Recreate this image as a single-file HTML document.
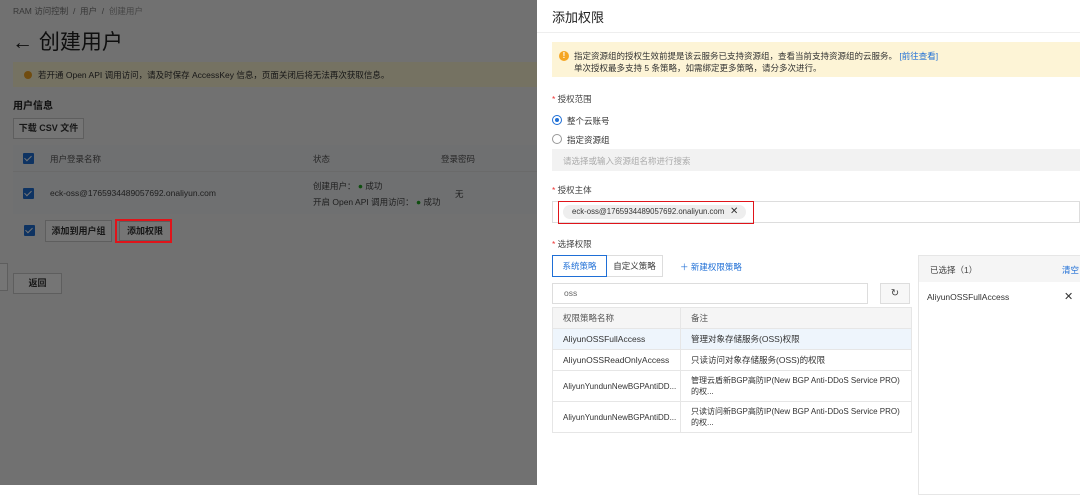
<!DOCTYPE html>
<html><head><meta charset="utf-8"><style>
*{margin:0;padding:0;box-sizing:border-box}
body{width:1080px;height:485px;overflow:hidden;position:relative;background:#fff;font-family:"Liberation Sans","Noto Sans CJK SC",sans-serif;font-size:9px;color:#333}
.a{position:absolute;white-space:nowrap}
.cb{position:absolute;width:11px;height:11px;background:#1f6fd6;border-radius:1px}
.cb:after{content:"";position:absolute;left:3px;top:1px;width:3px;height:6px;border:solid #fff;border-width:0 1.5px 1.5px 0;transform:rotate(45deg)}
.btn{position:absolute;border:1px solid #ccc;background:#fff;text-align:center;font-size:9px;color:#333;white-space:nowrap}
.ov{position:absolute;left:0;top:0;width:537px;height:485px;background:rgba(0,0,0,0.54)}
table{table-layout:fixed}
td{border:1px solid #e6e6e6;padding:0 10px;font-size:8.5px;color:#333;white-space:nowrap;overflow:hidden}
</style></head><body>
<div class="a" style="left:0;top:0;width:537px;height:485px;background:#f7f7f7"></div>
<div class="a" style="left:13px;top:5px;color:#777;font-size:8.5px">RAM 访问控制 &nbsp;/&nbsp; 用户 &nbsp;/&nbsp; <span style="color:#999">创建用户</span></div>
<div class="a" style="left:12px;top:26px;font-size:21px;color:#222">←&nbsp;创建用户</div>
<div class="a" style="left:13px;top:62px;width:524px;height:25px;background:#fff8d6"></div>
<div class="a" style="left:24px;top:71px;width:8px;height:8px;border-radius:50%;background:#f5a623"></div>
<div class="a" style="left:38px;top:69px;font-size:8.5px;color:#333">若开通 Open API 调用访问，请及时保存 AccessKey 信息，页面关闭后将无法再次获取信息。</div>
<div class="a" style="left:13px;top:97px;font-size:10px;font-weight:bold;color:#222">用户信息</div>
<div class="btn" style="left:13px;top:118px;width:71px;height:21px;line-height:19px;font-weight:bold">下载 CSV 文件</div>
<div class="a" style="left:13px;top:145px;width:524px;height:27px;background:#f2f4f7;border-bottom:1px solid #e6e6e6"></div>
<div class="a" style="left:13px;top:172px;width:524px;height:42px;background:#f2f4f7"></div>
<div class="cb" style="left:23px;top:153px"></div>
<div class="cb" style="left:23px;top:188px"></div>
<div class="cb" style="left:24px;top:225px"></div>
<div class="a" style="left:50px;top:153px;color:#555;font-size:8.5px">用户登录名称</div>
<div class="a" style="left:313px;top:153px;color:#555;font-size:8.5px">状态</div>
<div class="a" style="left:441px;top:153px;color:#555;font-size:8.5px">登录密码</div>
<div class="a" style="left:50px;top:188px;color:#444;font-size:8.5px">eck-oss@1765934489057692.onaliyun.com</div>
<div class="a" style="left:313px;top:180px;color:#444;font-size:8.5px">创建用户： <span style="color:#2a2">●</span> 成功</div>
<div class="a" style="left:313px;top:196px;color:#444;font-size:8.5px">开启 Open API 调用访问： <span style="color:#2a2">●</span> 成功</div>
<div class="a" style="left:455px;top:188px;color:#444;font-size:8.5px">无</div>
<div class="btn" style="left:45px;top:220px;width:67px;height:22px;line-height:20px;font-weight:bold">添加到用户组</div>
<div class="btn" style="left:119px;top:221px;width:52px;height:20px;line-height:18px;font-weight:bold">添加权限</div>
<div class="a" style="left:0;top:263px;width:8px;height:28px;border:1px solid #ccc;background:#fff;border-left:none"></div>
<div class="btn" style="left:13px;top:273px;width:49px;height:21px;line-height:19px;font-weight:bold">返回</div>
<div class="ov"></div>
<div class="a" style="left:115px;top:219px;width:57px;height:24px;border:2px solid #e0141a"></div>
<div class="a" style="left:552px;top:7px;font-size:13px;color:#222">添加权限</div>
<div class="a" style="left:537px;top:32px;width:543px;height:1px;background:#eee"></div>
<div class="a" style="left:552px;top:42px;width:528px;height:35px;background:#fdf4d6"></div>
<div class="a" style="left:559px;top:51px;width:10px;height:10px;border-radius:50%;background:#f5a623;color:#fff;font-size:8px;line-height:10px;text-align:center;font-weight:bold">!</div>
<div class="a" style="left:574px;top:50px;font-size:8.5px;line-height:12px;color:#333">指定资源组的授权生效前提是该云服务已支持资源组，查看当前支持资源组的云服务。 <span style="color:#1f6fd6">[前往查看]</span><br>单次授权最多支持 5 条策略，如需绑定更多策略，请分多次进行。</div>
<div class="a" style="left:552px;top:93px;font-size:8.5px;color:#444"><span style="color:#e33">*</span> 授权范围</div>
<div class="a" style="left:552px;top:115px;width:10px;height:10px;border-radius:50%;border:1px solid #1f6fd6"><div class="a" style="left:2px;top:2px;width:4px;height:4px;border-radius:50%;background:#1f6fd6"></div></div>
<div class="a" style="left:567px;top:115px;font-size:8.5px">整个云账号</div>
<div class="a" style="left:552px;top:134px;width:10px;height:10px;border-radius:50%;border:1px solid #999"></div>
<div class="a" style="left:567px;top:134px;font-size:8.5px">指定资源组</div>
<div class="a" style="left:552px;top:149px;width:528px;height:22px;background:#f2f2f2"></div>
<div class="a" style="left:563px;top:155px;font-size:8.5px;color:#aaa">请选择或输入资源组名称进行搜索</div>
<div class="a" style="left:552px;top:184px;font-size:8.5px;color:#444"><span style="color:#e33">*</span> 授权主体</div>
<div class="a" style="left:552px;top:201px;width:528px;height:22px;border:1px solid #ddd"></div>
<div class="a" style="left:563px;top:205px;width:183px;height:14px;border-radius:7px;background:#eee;font-size:7.8px;line-height:14px;padding-left:9px;color:#333">eck-oss@1765934489057692.onaliyun.com<span class="a" style="left:167px;top:0;font-size:10px">✕</span></div>
<div class="a" style="left:558px;top:201px;width:196px;height:23px;border:1.5px solid #e0141a"></div>
<div class="a" style="left:552px;top:238px;font-size:8.5px;color:#444"><span style="color:#e33">*</span> 选择权限</div>
<div class="a" style="left:552px;top:255px;width:55px;height:22px;border:1px solid #1f6fd6;color:#1f6fd6;font-size:8.5px;line-height:20px;text-align:center">系统策略</div>
<div class="a" style="left:607px;top:255px;width:56px;height:22px;border:1px solid #ddd;border-left:none;font-size:8.5px;line-height:20px;text-align:center">自定义策略</div>
<div class="a" style="left:680px;top:261px;font-size:8.5px;color:#1f6fd6">＋ 新建权限策略</div>
<div class="a" style="left:552px;top:283px;width:316px;height:21px;border:1px solid #ddd;font-size:8.5px;line-height:19px;padding-left:11px;color:#666">oss</div>
<div class="a" style="left:880px;top:283px;width:30px;height:21px;border:1px solid #ddd;background:#f7f7f7;text-align:center;line-height:19px;font-size:10px;color:#444">↻</div>
<table class="a" style="left:552px;top:307px;width:359px;border-collapse:collapse">
<colgroup><col style="width:128px"><col style="width:231px"></colgroup>
<tr style="height:21px;background:#f5f5f5"><td style="color:#555">权限策略名称</td><td style="color:#555">备注</td></tr>
<tr style="height:21px;background:#eef5fc"><td>AliyunOSSFullAccess</td><td>管理对象存储服务(OSS)权限</td></tr>
<tr style="height:21px"><td>AliyunOSSReadOnlyAccess</td><td>只读访问对象存储服务(OSS)的权限</td></tr>
<tr style="height:31px"><td style="font-size:8px">AliyunYundunNewBGPAntiDD...</td><td style="line-height:11px;font-size:8px">管理云盾新BGP高防IP(New BGP Anti-DDoS Service PRO)<br>的权...</td></tr>
<tr style="height:31px"><td style="font-size:8px">AliyunYundunNewBGPAntiDD...</td><td style="line-height:11px;font-size:8px">只读访问新BGP高防IP(New BGP Anti-DDoS Service PRO)<br>的权...</td></tr>
</table>
<div class="a" style="left:918px;top:255px;width:170px;height:240px;border:1px solid #e6e6e6"></div>
<div class="a" style="left:919px;top:256px;width:161px;height:26px;background:#f5f5f5"></div>
<div class="a" style="left:930px;top:264px;font-size:8.5px;color:#444">已选择（1）</div>
<div class="a" style="left:1062px;top:264px;font-size:8.5px;color:#1f6fd6">清空</div>
<div class="a" style="left:927px;top:292px;font-size:8.5px">AliyunOSSFullAccess</div>
<div class="a" style="left:1064px;top:290px;font-size:11px;color:#333">✕</div>
</body></html>
